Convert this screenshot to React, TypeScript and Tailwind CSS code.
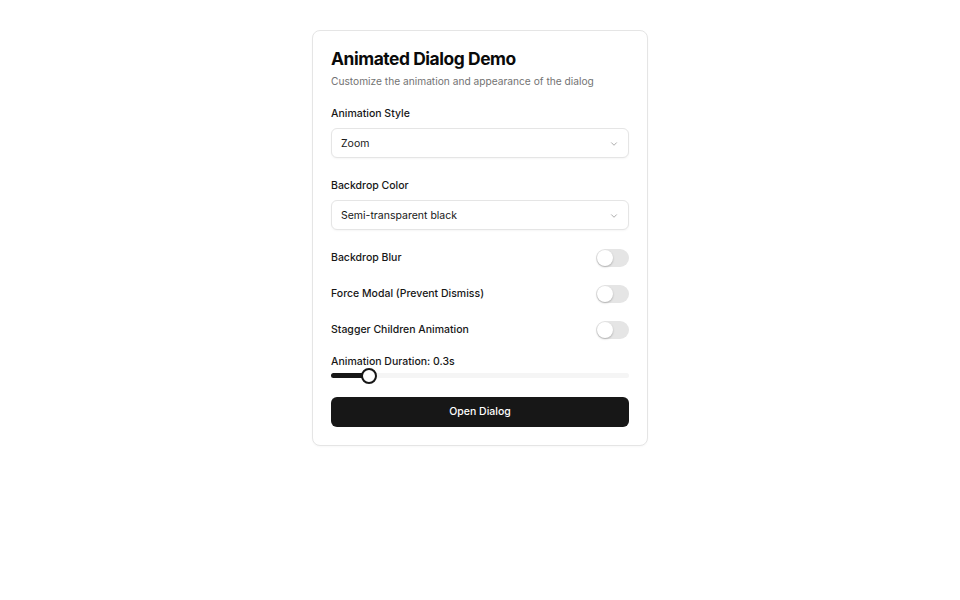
import { ChevronDown } from "lucide-react";

function Select({ value }: { value: string }) {
  return (
    <div className="flex h-[30px] items-center justify-between rounded-md border border-[#e5e5e5] bg-white px-[9px] pt-[1px] text-[10.5px] text-[#171717] shadow-[0_1px_2px_rgba(0,0,0,0.04)]">
      <span>{value}</span>
      <ChevronDown className="h-[10px] w-[10px] text-[#7a7a7a]" strokeWidth={1.5} />
    </div>
  );
}

function Switch({ label }: { label: string }) {
  return (
    <div className="flex h-[18px] items-center justify-between">
      <span className="text-[10.5px] font-medium text-[#171717]">{label}</span>
      <div className="flex h-[18px] w-[33px] items-center rounded-full bg-[#e5e5e5] px-[1px]">
        <div className="h-[16px] w-[16px] rounded-full bg-white shadow-[0_1px_2px_rgba(0,0,0,0.25)]" />
      </div>
    </div>
  );
}

export default function App() {
  return (
    <div
      className="flex min-h-screen justify-center bg-white pt-[30px]"
      style={{ fontFamily: "Inter, 'Noto Sans', sans-serif" }}
    >
      <div className="h-fit w-[336px] rounded-lg border border-[#e5e5e5] bg-white px-[18px] pb-[18px] pt-[15px] shadow-[0_1px_2px_rgba(0,0,0,0.03)]">
        <h1 className="text-[17.4px] font-bold leading-[26px] tracking-[-0.025em] text-[#0a0a0a]">
          Animated Dialog Demo
        </h1>
        <p className="mt-[1px] text-[10.2px] leading-[16px] text-[#737373]">
          Customize the animation and appearance of the dialog
        </p>

        <div className="mt-[18px]">
          <label className="block text-[10.5px] font-medium leading-[14px] text-[#171717]">
            Animation Style
          </label>
          <div className="mt-[7px]">
            <Select value="Zoom" />
          </div>
        </div>

        <div className="mt-[21px]">
          <label className="block text-[10.5px] font-medium leading-[14px] text-[#171717]">
            Backdrop Color
          </label>
          <div className="mt-[7px]">
            <Select value="Semi-transparent black" />
          </div>
        </div>

        <div className="mt-[19px] flex flex-col gap-[18px]">
          <Switch label="Backdrop Blur" />
          <Switch label="Force Modal (Prevent Dismiss)" />
          <Switch label="Stagger Children Animation" />
        </div>

        <div className="mt-[16px]">
          <label className="block text-[10.5px] font-medium leading-[14px] text-[#171717]">
            Animation Duration: 0.3s
          </label>
          <div className="relative flex h-[13px] items-center">
            <div className="h-[5px] w-full rounded-full bg-[#f5f5f5]">
              <div className="h-[5px] w-[37px] rounded-full bg-[#171717]" />
            </div>
            <div className="absolute left-[30px] top-[-1.5px] h-[16px] w-[16px] rounded-full border-2 border-[#171717] bg-white" />
          </div>
        </div>

        <button className="mt-[15px] flex h-[30px] w-full items-center justify-center rounded-md bg-[#171717] text-[10.5px] font-medium text-white">
          Open Dialog
        </button>
      </div>
    </div>
  );
}
